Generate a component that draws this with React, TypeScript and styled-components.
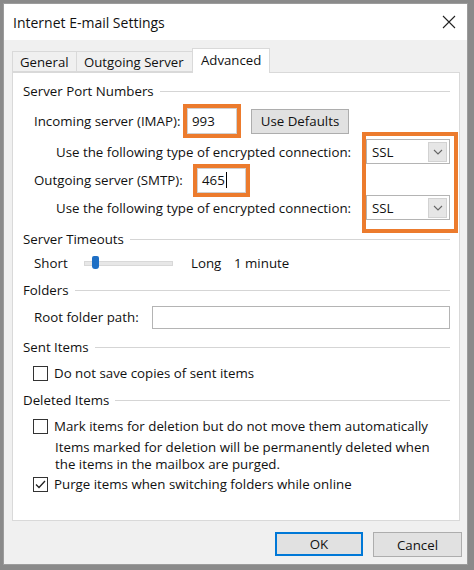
import React from "react";
import styled, { createGlobalStyle } from "styled-components";

const GlobalStyle = createGlobalStyle`
  html, body { margin: 0; padding: 0; }
  body {
    background: #8a8a8a;
    font-family: "Open Sans", "Noto Sans", "Liberation Sans", sans-serif;
    color: #111;
    width: 474px;
    height: 570px;
    overflow: hidden;
  }
  * { box-sizing: border-box; }
`;

const Page = styled.div`
  padding: 3px 0 0 3px;
`;

const Dialog = styled.div`
  width: 465px;
  height: 562px;
  background: #f0f0f0;
  border: 1px solid #9c9c9c;
  display: flex;
  flex-direction: column;
`;

const TitleBar = styled.div`
  height: 36px;
  background: #ffffff;
  display: flex;
  align-items: center;
  justify-content: space-between;
  padding: 0 10px 0 9px;
`;

const Title = styled.div`
  font-size: 14px;
  color: #111;
`;

const CloseIcon = styled.svg`
  width: 14px;
  height: 14px;
  margin-right: 1px;
`;

const Body = styled.div`
  padding: 8px 7px 0 8px;
  display: flex;
  flex-direction: column;
`;

const TabStrip = styled.div`
  height: 24px;
  display: flex;
  align-items: flex-end;
  position: relative;
  z-index: 1;
`;

const Tab = styled.div<{ $active?: boolean; $w: number }>`
  width: ${(p) => p.$w}px;
  height: ${(p) => (p.$active ? 25 : 21)}px;
  margin-bottom: ${(p) => (p.$active ? -1 : 0)}px;
  padding-left: ${(p) => (p.$active ? 8 : 7)}px;
  padding-top: ${(p) => (p.$active ? 2 : 1)}px;
  font-size: 13.2px;
  white-space: nowrap;
  background: ${(p) => (p.$active ? "#ffffff" : "#f0f0f0")};
  border: 1px solid #d9d9d9;
  border-bottom: ${(p) => (p.$active ? "none" : "1px solid #d9d9d9")};
  & + & { margin-left: -1px; }
`;

const Panel = styled.div`
  width: 448px;
  height: 449px;
  background: #ffffff;
  border: 1px solid #d9d9d9;
  padding: 9px 9px 0 10px;
  display: flex;
  flex-direction: column;
  font-size: 13.3px;
`;

const GroupHeader = styled.div<{ $mt?: number }>`
  height: 18px;
  margin-top: ${(p) => p.$mt ?? 0}px;
  display: flex;
  align-items: center;
  &::after {
    content: "";
    flex: 1;
    height: 1px;
    background: #d5d5d5;
    margin-left: 6px;
    margin-top: 1px;
  }
`;

const PortGrid = styled.div`
  display: grid;
  grid-template-columns: 339px 96px;
  grid-template-rows: 42px 20px 36px 20px;
`;

const Row = styled.div<{ $h: number; $mt?: number; $pl?: number }>`
  height: ${(p) => p.$h}px;
  margin-top: ${(p) => p.$mt ?? 0}px;
  padding-left: ${(p) => p.$pl ?? 11}px;
  display: flex;
  align-items: center;
  white-space: nowrap;
`;

const Label = styled.span<{ $w?: number }>`
  display: inline-block;
  ${(p) => (p.$w ? `width: ${p.$w}px; flex: none;` : "")}
`;

const Highlight = styled.div<{ $w: number; $h: number }>`
  width: ${(p) => p.$w}px;
  height: ${(p) => p.$h}px;
  border: 4px solid #ec7b2d;
  background: #ffffff;
  display: flex;
  flex: none;
`;

const PortInput = styled.div`
  flex: 1;
  border: 1px solid #d0d0d0;
  background: #fff;
  display: flex;
  align-items: center;
  padding-left: 4px;
`;

const Caret = styled.span`
  display: inline-block;
  width: 1px;
  height: 16px;
  background: #000;
  margin-left: 1px;
`;

const Button = styled.div<{ $w: number; $default?: boolean; $ml?: number }>`
  width: ${(p) => p.$w}px;
  height: ${(p) => (p.$default ? 24 : 25)}px;
  margin-left: ${(p) => p.$ml ?? 0}px;
  background: #e1e1e1;
  border: ${(p) => (p.$default ? "2px solid #0078d7" : "1px solid #adadad")};
  display: flex;
  align-items: center;
  justify-content: center;
  font-size: 13.3px;
  color: #111;
  flex: none;
`;

const SelectFrame = styled.div`
  grid-column: 2;
  grid-row: 2 / span 3;
  margin: -10px 0 -15px 0;
  border: 4px solid #ec7b2d;
  padding: 3px 4px 9px 0;
  display: flex;
  flex-direction: column;
  justify-content: space-between;
`;

const Select = styled.div`
  height: 25px;
  border: 1px solid #b4b4b4;
  background: #fff;
  display: flex;
  align-items: center;
  justify-content: space-between;
  padding: 0 2px 0 5px;
`;

const DropButton = styled.div`
  width: 19px;
  height: 20px;
  background: #e6e6e6;
  border: 1px solid #d2d2d2;
  display: flex;
  align-items: center;
  justify-content: center;
`;

const EncLabel = styled.div<{ $row: number }>`
  grid-column: 1;
  grid-row: ${(p) => p.$row};
  display: flex;
  align-items: center;
  padding-left: 33px;
  white-space: nowrap;
`;

const GridRow = styled.div<{ $row: number }>`
  grid-column: 1 / span 2;
  grid-row: ${(p) => p.$row};
  display: flex;
  align-items: center;
  padding-left: 11px;
  white-space: nowrap;
`;

const Track = styled.div`
  width: 89px;
  height: 5px;
  background: #e7e7e7;
  border: 1px solid #d8d8d8;
  position: relative;
  flex: none;
`;

const Thumb = styled.div`
  position: absolute;
  left: 7px;
  top: -6px;
  width: 7px;
  height: 13px;
  background: #1e6fc5;
  border-radius: 2px 2px 3px 3px;
`;

const TextField = styled.div`
  width: 298px;
  height: 23px;
  border: 1px solid #b4b4b4;
  background: #fff;
  flex: none;
`;

const Box = styled.div`
  width: 15px;
  height: 15px;
  border: 1px solid #333;
  background: #fff;
  margin-right: 6px;
  flex: none;
  display: flex;
  align-items: center;
  justify-content: center;
`;

const Note = styled.div`
  margin-top: 3px;
  padding-left: 32px;
  line-height: 17px;
  white-space: nowrap;
`;

const Footer = styled.div`
  display: flex;
  justify-content: flex-end;
  gap: 10px;
  padding: 11px 5px 0 0;
`;

const Chevron = () => (
  <svg width="10" height="6" viewBox="0 0 10 6">
    <path d="M1 1 L5 5 L9 1" fill="none" stroke="#666" strokeWidth="1.1" />
  </svg>
);

const Check = ({ checked }: { checked?: boolean }) => (
  <Box>
    {checked && (
      <svg width="11" height="9" viewBox="0 0 11 9">
        <path d="M1 4.5 L4 7.5 L10 1" fill="none" stroke="#222" strokeWidth="1.3" />
      </svg>
    )}
  </Box>
);

export default function App() {
  return (
    <>
      <GlobalStyle />
      <Page>
        <Dialog>
          <TitleBar>
            <Title>Internet E-mail Settings</Title>
            <CloseIcon viewBox="0 0 14 14">
              <path d="M1 1 L13 13 M13 1 L1 13" stroke="#222" strokeWidth="1.1" />
            </CloseIcon>
          </TitleBar>
          <Body>
            <TabStrip>
              <Tab $w={65}>General</Tab>
              <Tab $w={117}>Outgoing Server</Tab>
              <Tab $w={78} $active>
                Advanced
              </Tab>
            </TabStrip>
            <Panel>
              <GroupHeader>Server Port Numbers</GroupHeader>
              <PortGrid>
                <GridRow $row={1}>
                  <Label $w={149}>Incoming server (IMAP):</Label>
                  <Highlight $w={58} $h={34}>
                    <PortInput>993</PortInput>
                  </Highlight>
                  <Button $w={98} $ml={10}>
                    Use Defaults
                  </Button>
                </GridRow>
                <EncLabel $row={2}>Use the following type of encrypted connection:</EncLabel>
                <GridRow $row={3}>
                  <Label $w={159}>Outgoing server (SMTP):</Label>
                  <Highlight $w={57} $h={33}>
                    <PortInput>
                      465
                      <Caret />
                    </PortInput>
                  </Highlight>
                </GridRow>
                <EncLabel $row={4}>Use the following type of encrypted connection:</EncLabel>
                <SelectFrame>
                  <Select>
                    SSL
                    <DropButton>
                      <Chevron />
                    </DropButton>
                  </Select>
                  <Select>
                    SSL
                    <DropButton>
                      <Chevron />
                    </DropButton>
                  </Select>
                </SelectFrame>
              </PortGrid>

              <GroupHeader $mt={12}>Server Timeouts</GroupHeader>
              <Row $h={30}>
                <Label $w={50}>Short</Label>
                <Track>
                  <Thumb />
                </Track>
                <Label $w={43} style={{ marginLeft: 18 }}>Long</Label>
                <Label>1 minute</Label>
              </Row>

              <GroupHeader $mt={3}>Folders</GroupHeader>
              <Row $h={36}>
                <Label $w={118}>Root folder path:</Label>
                <TextField />
              </Row>

              <GroupHeader $mt={3}>Sent Items</GroupHeader>
              <Row $h={34} $pl={10}>
                <Check />
                Do not save copies of sent items
              </Row>

              <GroupHeader $mt={1}>Deleted Items</GroupHeader>
              <Row $h={20} $mt={7} $pl={10}>
                <Check />
                Mark items for deletion but do not move them automatically
              </Row>
              <Note>
                Items marked for deletion will be permanently deleted when
                <br />
                the items in the mailbox are purged.
              </Note>
              <Row $h={20} $mt={1} $pl={10}>
                <Check checked />
                Purge items when switching folders while online
              </Row>
            </Panel>
          </Body>
          <Footer>
            <Button $w={88} $default>
              OK
            </Button>
            <Button $w={89}>Cancel</Button>
          </Footer>
        </Dialog>
      </Page>
    </>
  );
}
